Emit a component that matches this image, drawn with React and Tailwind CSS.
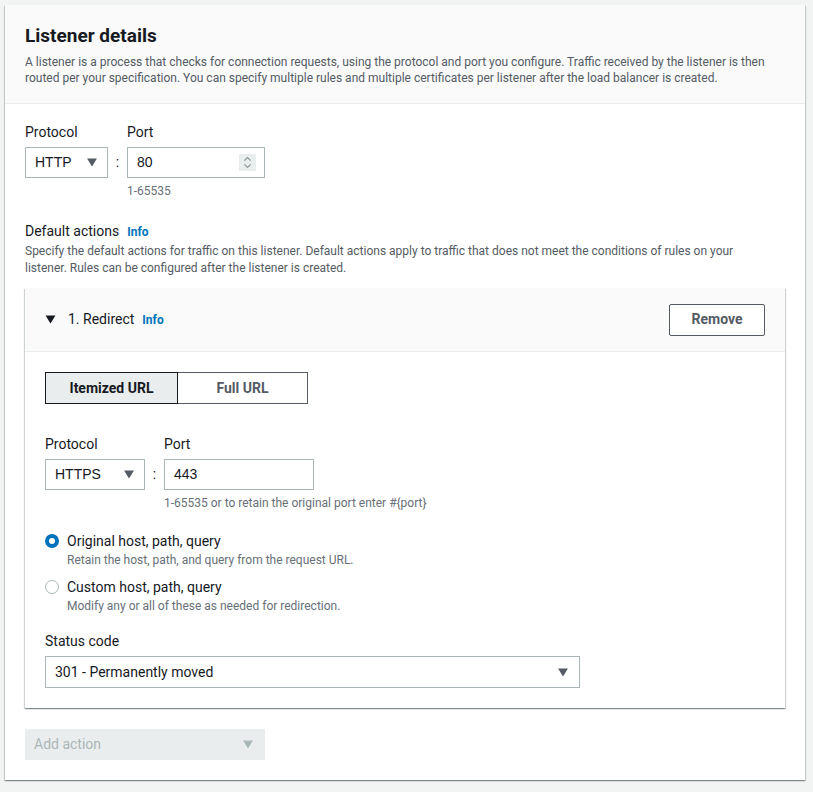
import React, { useState } from 'react';

const font = { fontFamily: 'Roboto, "Noto Sans", sans-serif' };

const Caret = ({ className = '' }) => (
  <svg viewBox="0 0 12 10" className={className} aria-hidden="true">
    <path d="M0.5 0.5 H11.5 L6 9.5 Z" fill="currentColor" />
  </svg>
);

const Info = () => (
  <span className="ml-2 text-[12px] font-bold text-[#0073bb]">Info</span>
);

const SelectBox = ({ value, className = '', disabled }) => (
  <div
    className={`flex h-[31px] items-center justify-between px-[9px] ${
      disabled
        ? 'bg-[#eaeded] text-[#aab7b8]'
        : 'border border-[#aab7b8] bg-white text-[#16191f]'
    } ${className}`}
  >
    <span className="text-[14px]" style={disabled ? font : { fontFamily: '"Liberation Sans", Arial, sans-serif' }}>
      {value}
    </span>
    <Caret className={`h-[9px] w-[12px] ${disabled ? 'text-[#aab7b8]' : 'text-[#545b64]'}`} />
  </div>
);

const PortInput = ({ value, width, spinner }) => (
  <div
    className={`flex h-[31px] items-center justify-between border border-[#aab7b8] bg-white pl-[9px] pr-[8px] ${width}`}
  >
    <span className="text-[14px] text-[#16191f]" style={{ fontFamily: '"Liberation Sans", Arial, sans-serif' }}>
      {value}
    </span>
    {spinner && (
      <div className="flex h-[17px] w-[17px] flex-col items-center justify-center bg-[#eaeded]">
        <svg viewBox="0 0 10 14" className="h-[13px] w-[9px] text-[#879596]" fill="none" stroke="currentColor" strokeWidth="1.2">
          <path d="M1.5 5 L5 1.5 L8.5 5" />
          <path d="M1.5 9 L5 12.5 L8.5 9" />
        </svg>
      </div>
    )}
  </div>
);

const ProtoPort = ({ proto, protoW, port, portW, hint, spinner, colonX }) => (
  <div>
    <div className="flex items-start">
      <div className={protoW}>
        <div className="mb-[6px] text-[14px] leading-[18px] text-[#16191f]">Protocol</div>
        <SelectBox value={proto} />
      </div>
      <div className={`${colonX} pt-[24px] text-center text-[14px] leading-[31px] text-[#16191f]`}>:</div>
      <div>
        <div className="mb-[6px] text-[14px] leading-[18px] text-[#16191f]">Port</div>
        <PortInput value={port} width={portW} spinner={spinner} />
        <div className="mt-[5px] text-[12px] leading-[16px] text-[#687078]">{hint}</div>
      </div>
    </div>
  </div>
);

const Radio = ({ checked, label, desc }) => (
  <div className="flex items-start">
    <div
      className={`mt-[2px] h-[14px] w-[14px] shrink-0 rounded-full ${
        checked ? 'border-[4px] border-[#0073bb] bg-white' : 'border border-[#aab7b8] bg-white'
      }`}
    />
    <div className="ml-[8px]">
      <div className="text-[14px] leading-[18px] text-[#16191f]">{label}</div>
      <div className="mt-[2px] text-[12px] leading-[16px] text-[#687078]">{desc}</div>
    </div>
  </div>
);

export default function App() {
  const [mode, setMode] = useState('itemized');
  const [target, setTarget] = useState('original');

  return (
    <div className="min-h-[792px] bg-[#f2f3f3] pl-[5px] pr-[8px] pt-[5px]" style={font}>
      <div className="w-[800px] bg-white shadow-[0_1px_1px_0_rgba(0,28,36,0.3),1px_1px_1px_0_rgba(0,28,36,0.15),-1px_1px_1px_0_rgba(0,28,36,0.15)]">
        {/* Header */}
        <div className="border-b border-[#eaeded] bg-[#fafafa] px-[20px] pb-[17px] pt-[20px]">
          <h2 className="text-[19px] font-bold leading-[22px] text-[#16191f]">Listener details</h2>
          <p className="mt-[7px] text-[12px] leading-[16px] text-[#545b64]">
            A listener is a process that checks for connection requests, using the protocol and port you configure. Traffic received by the listener is then routed per your specification. You can specify multiple rules and multiple certificates per listener after the load balancer is created.
          </p>
        </div>

        <div className="px-[20px] pb-[20px] pt-[19px]">
          <ProtoPort
            proto="HTTP"
            protoW="w-[83px]"
            port="80"
            portW="w-[138px]"
            hint="1-65535"
            spinner
            colonX="w-[19px]"
          />

          {/* Default actions */}
          <div className="mt-[23px]">
            <div className="flex items-baseline">
              <span className="text-[14px] leading-[18px] text-[#16191f]">Default actions</span>
              <Info />
            </div>
            <p className="mt-[2px] max-w-[745px] text-[12px] leading-[17px] text-[#545b64]">
              Specify the default actions for traffic on this listener. Default actions apply to traffic that does not meet the conditions of rules on your listener. Rules can be configured after the listener is created.
            </p>
          </div>

          {/* Action card */}
          <div className="mt-[11px] bg-white shadow-[0_1px_1px_0_rgba(0,28,36,0.3),1px_1px_1px_0_rgba(0,28,36,0.15),-1px_1px_1px_0_rgba(0,28,36,0.15)]">
            <div className="flex h-[64px] items-center justify-between border-b border-[#eaeded] bg-[#fafafa] pl-[20px] pr-[20px]">
              <div className="flex items-baseline">
                <Caret className="mr-[12px] h-[9px] w-[11px] self-center text-[#16191f]" />
                <span className="text-[14px] text-[#16191f]">1. Redirect</span>
                <Info />
              </div>
              <button className="h-[32px] w-[96px] rounded-[2px] border border-[#545b64] bg-white text-[14px] font-bold text-[#545b64]">
                Remove
              </button>
            </div>

            <div className="px-[20px] pb-[20px] pt-[20px]">
              {/* Segmented */}
              <div className="flex h-[32px] w-[263px]">
                <button
                  onClick={() => setMode('itemized')}
                  className={`w-[133px] border text-[14px] font-bold ${
                    mode === 'itemized'
                      ? 'border-[#16191f] bg-[#eaeded] text-[#16191f]'
                      : 'border-[#545b64] bg-white text-[#545b64]'
                  }`}
                >
                  Itemized URL
                </button>
                <button
                  onClick={() => setMode('full')}
                  className={`w-[130px] border border-l-0 text-[14px] font-bold ${
                    mode === 'full'
                      ? 'border-[#16191f] bg-[#eaeded] text-[#16191f]'
                      : 'border-[#545b64] bg-white text-[#545b64]'
                  }`}
                >
                  Full URL
                </button>
              </div>

              <div className="mt-[31px]">
                <ProtoPort
                  proto="HTTPS"
                  protoW="w-[100px]"
                  port="443"
                  portW="w-[150px]"
                  hint="1-65535 or to retain the original port enter #{port}"
                  colonX="w-[19px]"
                />
              </div>

              <div className="mt-[21px] flex flex-col gap-[10px]">
                <div onClick={() => setTarget('original')}>
                  <Radio
                    checked={target === 'original'}
                    label="Original host, path, query"
                    desc="Retain the host, path, and query from the request URL."
                  />
                </div>
                <div onClick={() => setTarget('custom')}>
                  <Radio
                    checked={target === 'custom'}
                    label="Custom host, path, query"
                    desc="Modify any or all of these as needed for redirection."
                  />
                </div>
              </div>

              <div className="mt-[18px]">
                <div className="mb-[6px] text-[14px] leading-[18px] text-[#16191f]">Status code</div>
                <div className="flex h-[32px] w-[535px] items-center justify-between border border-[#aab7b8] bg-white pl-[9px] pr-[10px]">
                  <span className="text-[14px] text-[#16191f]">301 - Permanently moved</span>
                  <Caret className="h-[9px] w-[12px] text-[#545b64]" />
                </div>
              </div>
            </div>
          </div>

          <div className="mt-[21px]">
            <SelectBox value="Add action" className="w-[240px] pr-[11px]" disabled />
          </div>
        </div>
      </div>
    </div>
  );
}
